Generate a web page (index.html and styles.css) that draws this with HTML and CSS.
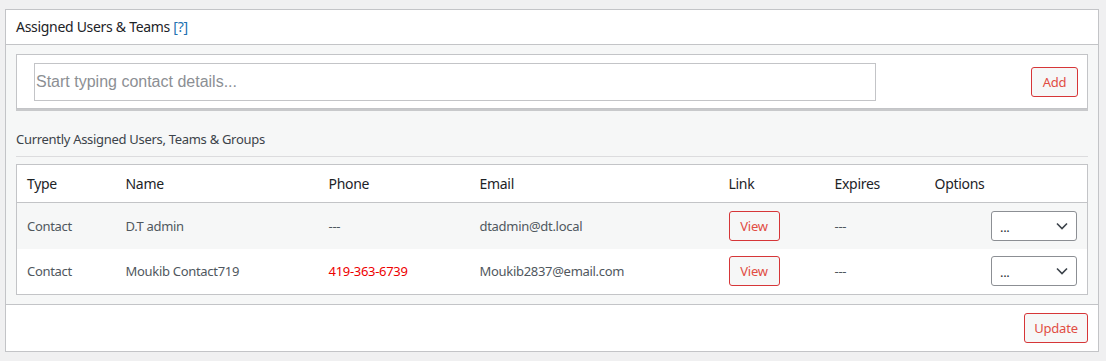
FILE: index.html
```html
<!DOCTYPE html>
<html>
<head>
<meta charset="utf-8">
<link rel="stylesheet" href="styles.css">
</head>
<body>
<div class="panel">
  <div class="panel-head">Assigned Users &amp; Teams <a class="help">[?]</a></div>
  <div class="panel-body">
    <div class="card">
      <input class="search" type="text" placeholder="Start typing contact details...">
      <button class="btn btn-add">Add</button>
    </div>
    <div class="subhead">Currently Assigned Users, Teams &amp; Groups</div>
    <table class="grid">
      <thead>
        <tr>
          <th class="c-type">Type</th>
          <th class="c-name">Name</th>
          <th class="c-phone">Phone</th>
          <th class="c-email">Email</th>
          <th class="c-link">Link</th>
          <th class="c-exp">Expires</th>
          <th class="c-opt">Options</th>
        </tr>
      </thead>
      <tbody>
        <tr class="odd">
          <td>Contact</td>
          <td>D.T admin</td>
          <td>---</td>
          <td>dtadmin@dt.local</td>
          <td><button class="btn btn-view">View</button></td>
          <td>---</td>
          <td class="opt"><div class="select"><span>...</span><svg width="12" height="8" viewBox="0 0 12 8"><path d="M1 1.5 L6 6.5 L11 1.5" fill="none" stroke="#3c434a" stroke-width="1.6"/></svg></div></td>
        </tr>
        <tr>
          <td>Contact</td>
          <td>Moukib Contact719</td>
          <td class="phone">419-363-6739</td>
          <td>Moukib2837@email.com</td>
          <td><button class="btn btn-view">View</button></td>
          <td>---</td>
          <td class="opt"><div class="select"><span>...</span><svg width="12" height="8" viewBox="0 0 12 8"><path d="M1 1.5 L6 6.5 L11 1.5" fill="none" stroke="#3c434a" stroke-width="1.6"/></svg></div></td>
        </tr>
      </tbody>
    </table>
  </div>
  <div class="panel-foot">
    <button class="btn btn-update">Update</button>
  </div>
</div>
</body>
</html>
```
FILE: styles.css
```css
* { box-sizing: border-box; }
body {
  margin: 0;
  padding: 9px 7px 0 5px;
  background: #f0f0f1;
  font-family: "Noto Sans", sans-serif;
  color: #3c434a;
  letter-spacing: -0.3px;
}
.panel {
  border: 1px solid #c3c4c7;
  background: #fff;
  width: 1094px;
}
.panel-head {
  height: 35px;
  line-height: 34px;
  padding: 0 10px;
  font-size: 14px;
  color: #1d2327;
  border-bottom: 1px solid #c3c4c7;
}
.help { color: #2271b1; }
.panel-body {
  background: #f6f7f7;
  padding: 9px 10px 9px 10px;
  border-bottom: 1px solid #c3c4c7;
}
.card {
  background: #fff;
  border: 1px solid #c3c4c7;
  box-shadow: 0 2px 0 #c8c9cb;
  height: 55px;
  display: flex;
  align-items: flex-start;
  justify-content: space-between;
  padding: 8px 9px 0 17px;
}
.search {
  width: 842px;
  height: 38px;
  border: 1px solid #c3c4c7;
  border-radius: 0;
  padding: 0 1px;
  font-family: "Liberation Sans", sans-serif;
  font-size: 16px;
  letter-spacing: 0;
  color: #2c3338;
  outline: none;
}
.search::placeholder { color: #8c8f94; }
.btn {
  font-family: "Noto Sans", sans-serif;
  font-size: 13px;
  letter-spacing: -0.2px;
  color: #e14d43;
  background: #f6f7f7;
  border: 1px solid #d63638;
  border-radius: 3px;
  height: 30px;
  padding: 0 10px;
  cursor: pointer;
}
.btn-add { margin-top: 4px; width: 47px; padding: 0; }
.subhead {
  margin-top: 20px;
  line-height: 20px;
  font-size: 13px;
  color: #3c434a;
  padding-bottom: 7px;
  border-bottom: 1px solid #dcdcde;
  margin-bottom: 7px;
}
.grid {
  width: 100%;
  border-collapse: collapse;
  border: 1px solid #c3c4c7;
  background: #fff;
  font-size: 13px;
}
.grid th {
  text-align: left;
  font-weight: 400;
  font-size: 14px;
  color: #1d2327;
  height: 38px;
  padding: 0 10px;
  border-bottom: 1px solid #c3c4c7;
}
.grid td {
  height: 46px;
  padding: 0 10px;
  color: #50575e;
}
.grid tr.odd td { background: #f6f7f7; }
.c-type { width: 99px; }
.c-name { width: 203px; }
.c-phone { width: 151px; }
.c-email { width: 249px; }
.c-link { width: 106px; }
.c-exp { width: 100px; }
.grid td.phone { color: #e00; }
.btn-view { width: 51px; padding: 0; }
.grid td.opt { text-align: right; padding-right: 10px; }
.select {
  display: inline-flex;
  align-items: center;
  justify-content: space-between;
  width: 86px;
  height: 30px;
  border: 1px solid #8c8f94;
  border-radius: 3px;
  background: #fff;
  padding: 0 8px 0 8px;
  color: #2c3338;
  font-size: 13px;
  vertical-align: middle;
}
.select span { position: relative; top: 1px; }
.panel-foot {
  height: 46px;
  display: flex;
  align-items: center;
  justify-content: flex-end;
  padding: 0 10px;
}
.btn-update { width: 64px; padding: 0; }
```
